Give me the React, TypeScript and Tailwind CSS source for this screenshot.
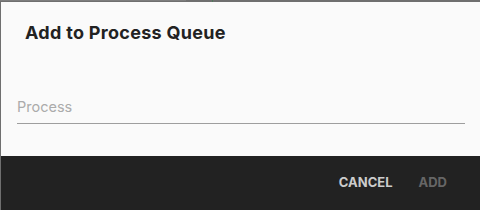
import React from "react";

export default function App() {
  return (
    <div
      className="relative w-[480px] h-[210px] overflow-hidden bg-[#6f6f6f] pt-[2px] pl-[1px] flex flex-col"
      style={{ fontFamily: "Inter, 'Open Sans', sans-serif" }}
    >
      <div className="absolute left-0 top-0 w-[186px] h-[1px] bg-[#7d7d7d]" />
      <div className="absolute left-[212px] top-0 w-[1px] h-[2px] bg-[#4e7a5a]" />
      <div className="absolute left-[228px] top-[-11px] text-[13px] leading-[13px] text-[#2e2e2e] font-semibold">
        Dec 7th 2018
      </div>
      <div className="relative flex-1 flex flex-col bg-[#fafafa]">
        <div className="h-[154px] flex flex-col">
          <h2 className="pl-[24px] pt-[19px] text-[18px] leading-[24px] font-bold text-[#222] tracking-[0.3px]">
            Add to Process Queue
          </h2>
          <div className="ml-[16px] mr-[15px] mt-[52px] border-b border-[#9e9e9e] pb-[6px]">
            <div className="text-[14.5px] leading-[20px] text-[#ababab]">Process</div>
          </div>
        </div>
        <div className="flex-1 bg-[#222222] flex items-center justify-end pr-[33px] gap-[26px]">
          <span className="text-[13px] font-bold text-[#cccccc]">CANCEL</span>
          <span className="text-[13px] font-bold text-[#666666]">ADD</span>
        </div>
      </div>
    </div>
  );
}
